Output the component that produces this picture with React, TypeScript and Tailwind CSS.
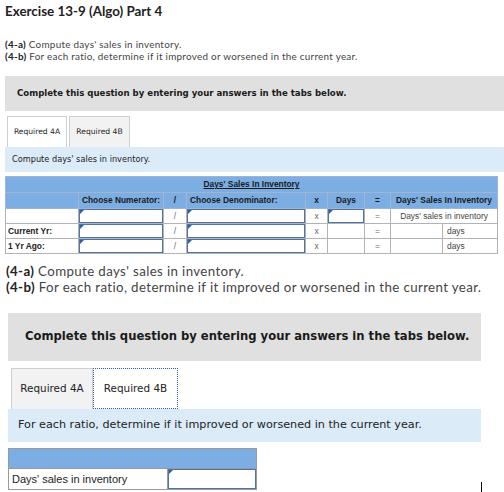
import React from "react";

const proxima = { fontFamily: 'Lato, "Open Sans", "Liberation Sans", sans-serif' };

function Tri() {
  return (
    <span className="absolute left-0 top-0 h-0 w-0 border-l-[4px] border-b-[4px] border-l-[#2f5fa8] border-b-transparent" />
  );
}

function InputBox() {
  return (
    <div className="relative h-full w-full border border-[#4f74a8] bg-white">
      <Tri />
    </div>
  );
}

export default function App() {
  const cell = "border border-[#b3b3b3] p-0 h-[15px]";
  const hcell = "border border-[#9fb6d0] bg-[#7cade3] p-0 h-[16px] font-bold text-[#1a1a1a]";
  return (
    <div className="relative w-[504px] h-[492px] overflow-hidden bg-white text-[#333]">
      {/* TOP SMALL SECTION */}
      <div className="pl-[5px] pt-[3px] text-[13.4px] font-bold leading-[16px] text-[#222]" style={proxima}>
        Exercise 13-9 (Algo) Part 4
      </div>
      <div className="pl-[5px] pt-[19px] text-[9.9px] leading-[12px] tracking-[0.27px] text-[#444]" style={proxima}>
        <div>
          <span className="font-bold text-[#222]">(4-a)</span> Compute days' sales in inventory.
        </div>
        <div>
          <span className="font-bold text-[#222]">(4-b)</span> For each ratio, determine if it improved or worsened in the current year.
        </div>
      </div>
      <div className="ml-[5px] mt-[14px] flex h-[35px] items-center bg-[#e0e0e0] pl-[12px] font-['DejaVu_Sans',sans-serif] text-[8.6px] font-bold text-[#1a1a1a]">
        Complete this question by entering your answers in the tabs below.
      </div>
      <div className="ml-[7px] mt-[5px] flex h-[31px] items-stretch gap-[2px] font-['DejaVu_Sans',sans-serif] text-[7.6px] text-[#222]">
        <div className="flex w-[60px] items-center justify-center border border-b-0 border-[#cfcfcf] bg-white">Required 4A</div>
        <div className="flex w-[61px] items-center justify-center border border-b-0 border-[#cfcfcf] bg-[#f2f2f2]">Required 4B</div>
      </div>
      <div className="ml-[5px] flex h-[25px] items-center bg-[#dbebf8] pl-[7px] font-['DejaVu_Sans',sans-serif] text-[8.2px] text-[#222]">
        Compute days' sales in inventory.
      </div>
      <table className="ml-[5px] mt-[4px] w-[492px] table-fixed border-collapse font-['Liberation_Sans',sans-serif] text-[8.4px] text-[#222]">
        <colgroup>
          <col className="w-[73px]" />
          <col className="w-[85px]" />
          <col className="w-[23px]" />
          <col className="w-[119px]" />
          <col className="w-[22px]" />
          <col className="w-[37px]" />
          <col className="w-[26px]" />
          <col className="w-[107px]" />
        </colgroup>
        <tbody>
          <tr>
            <td colSpan={8} className={hcell + " text-center"}>
              <span className="underline">Days' Sales In Inventory</span>
            </td>
          </tr>
          <tr>
            <td className={hcell}></td>
            <td className={hcell + " text-center"}>Choose Numerator:</td>
            <td className={hcell + " text-center"}>/</td>
            <td className={hcell + " pl-[3px] text-left"}>Choose Denominator:</td>
            <td className={hcell + " text-center"}>x</td>
            <td className={hcell + " text-center"}>Days</td>
            <td className={hcell + " text-center"}>=</td>
            <td className={hcell + " text-center"}>Days' Sales In Inventory</td>
          </tr>
          <tr>
            <td className={cell}></td>
            <td className={cell}><InputBox /></td>
            <td className={cell + " text-center text-[#666]"}>/</td>
            <td className={cell}><InputBox /></td>
            <td className={cell + " text-center text-[#666]"}>x</td>
            <td className={cell}><InputBox /></td>
            <td className={cell + " text-center text-[#666]"}>=</td>
            <td className={cell + " text-center text-[#444]"}>Days' sales in inventory</td>
          </tr>
          {["Current Yr:", "1 Yr Ago:"].map((l) => (
            <tr key={l}>
              <td className={cell + " pl-[2px] font-bold"}>{l}</td>
              <td className={cell}><InputBox /></td>
              <td className={cell + " text-center text-[#666]"}>/</td>
              <td className={cell}><InputBox /></td>
              <td className={cell + " text-center text-[#666]"}>x</td>
              <td className={cell}></td>
              <td className={cell + " text-center text-[#666]"}>=</td>
              <td className={cell}>
                <div className="flex h-full">
                  <div className="w-[52px] border-r border-[#b3b3b3]"></div>
                  <div className="flex items-center pl-[4px] text-[#444]">days</div>
                </div>
              </td>
            </tr>
          ))}
        </tbody>
      </table>

      {/* BOTTOM LARGE SECTION */}
      <div className="pl-[6px] pt-[9px] text-[13.3px] leading-[16px] tracking-[0.37px] text-[#444]" style={proxima}>
        <div>
          <span className="font-bold text-[#222]">(4-a)</span> Compute days' sales in inventory.
        </div>
        <div>
          <span className="font-bold text-[#222]">(4-b)</span> For each ratio, determine if it improved or worsened in the current year.
        </div>
      </div>
      <div className="ml-[8px] mt-[18px] flex h-[48px] w-[473px] items-center bg-[#e0e0e0] pl-[17px] font-['DejaVu_Sans',sans-serif] text-[11.6px] font-bold text-[#1a1a1a]">
        Complete this question by entering your answers in the tabs below.
      </div>
      <div className="ml-[11px] mt-[7px] flex h-[41px] items-stretch font-['DejaVu_Sans',sans-serif] text-[10.4px] text-[#222]">
        <div className="flex w-[82px] items-center justify-center border border-b-0 border-[#cfcfcf] bg-[#f2f2f2]">Required 4A</div>
        <div className="flex w-[85px] items-center justify-center border border-dotted border-[#2f58b0] bg-white">Required 4B</div>
      </div>
      <div className="ml-[8px] flex h-[33px] w-[473px] items-center bg-[#dbebf8] pl-[10px] font-['DejaVu_Sans',sans-serif] text-[11.2px] text-[#222]">
        For each ratio, determine if it improved or worsened in the current year.
      </div>
      <div className="ml-[8px] mt-[6px] w-[249px] border border-[#9a9a9a] font-['Liberation_Sans',sans-serif] text-[11px] text-[#222]">
        <div className="h-[20px] bg-[#7cade3] border-b border-[#9a9a9a]"></div>
        <div className="flex h-[20px]">
          <div className="flex w-[159px] items-center border-r border-[#9a9a9a] pl-[3px]">Days' sales in inventory</div>
          <div className="relative flex-1 border border-[#4f74a8] bg-white">
            <Tri />
          </div>
        </div>
      </div>

      {/* mouse text cursor */}
      <div className="absolute left-[481px] top-[482px] h-[10px] w-[1px] bg-black" />
    </div>
  );
}
